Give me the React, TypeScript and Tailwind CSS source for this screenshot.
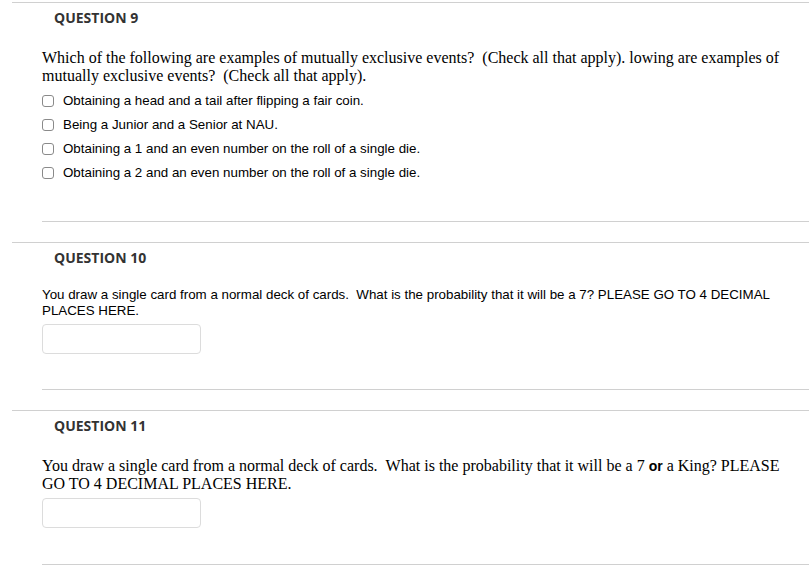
const serif = { fontFamily: '"Liberation Serif", "Times New Roman", serif' };

function Header({ n }: { n: number }) {
  return (
    <div className="pt-[6px] pl-[42px] text-[14px] leading-[18px] font-bold text-[#333] font-['Open_Sans',sans-serif]">
      QUESTION {n}
    </div>
  );
}

function Checkbox() {
  return <span className="w-[12px] h-[12px] rounded-[3px] border border-[#8a8a8a] bg-white shrink-0" />;
}

function AnswerBox({ top }: { top: string }) {
  return <div className={`${top} w-[159px] h-[30px] rounded-[4px] border border-[#dcdcdc] bg-white`} />;
}

const answers = [
  'Obtaining a head and a tail after flipping a fair coin.',
  'Being a Junior and a Senior at NAU.',
  'Obtaining a 1 and an even number on the roll of a single die.',
  'Obtaining a 2 and an even number on the roll of a single die.',
];

export default function App() {
  return (
    <div className="w-[809px] h-[569px] bg-white overflow-hidden pt-[2px] pl-3 text-black font-['Liberation_Sans',Arial,sans-serif]">
      {/* Question 9 */}
      <section className="border-t border-[#d0d0d0]">
        <Header n={9} />
        <div className="pl-[30px]">
          <p className="mt-[22px] text-[16px] leading-[18px] pr-6" style={serif}>
            Which of the following are examples of mutually exclusive events? &nbsp;(Check all that apply). lowing are examples of mutually exclusive events? &nbsp;(Check all that apply).
          </p>
          <ul className="mt-[4px]">
            {answers.map((a) => (
              <li key={a} className="h-[24px] flex items-center gap-[9px] text-[13.33px]">
                <Checkbox />
                <span>{a}</span>
              </li>
            ))}
          </ul>
          <div className="mt-[36px] border-t border-[#d0d0d0]" />
        </div>
      </section>

      {/* Question 10 */}
      <section className="mt-[20px] border-t border-[#d0d0d0]">
        <Header n={10} />
        <div className="pl-[30px]">
          <p className="mt-[20px] text-[13.33px] leading-[16px] pr-8">
            You draw a single card from a normal deck of cards. &nbsp;What is the probability that it will be a 7? PLEASE GO TO 4 DECIMAL PLACES HERE.
          </p>
          <AnswerBox top="mt-[5px]" />
          <div className="mt-[35px] border-t border-[#d0d0d0]" />
        </div>
      </section>

      {/* Question 11 */}
      <section className="mt-[20px] border-t border-[#d0d0d0]">
        <Header n={11} />
        <div className="pl-[30px]">
          <p className="mt-[22px] text-[16px] leading-[18px] pr-6" style={serif}>
            You draw a single card from a normal deck of cards. &nbsp;What is the probability that it will be a 7{' '}
            <b className="font-['Liberation_Sans',Arial,sans-serif] text-[14px]">or</b> a King? PLEASE GO TO 4 DECIMAL PLACES HERE.
          </p>
          <AnswerBox top="mt-[5px]" />
          <div className="mt-[36px] border-t border-[#d0d0d0]" />
        </div>
      </section>
    </div>
  );
}
